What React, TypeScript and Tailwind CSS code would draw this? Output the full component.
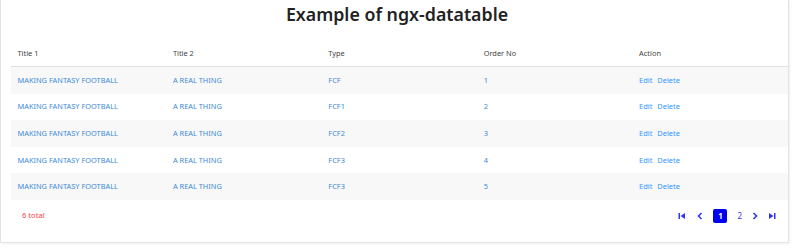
import React from 'react';

const rows = [
  { t1: 'MAKING FANTASY FOOTBALL', t2: 'A REAL THING', type: 'FCF', no: '1' },
  { t1: 'MAKING FANTASY FOOTBALL', t2: 'A REAL THING', type: 'FCF1', no: '2' },
  { t1: 'MAKING FANTASY FOOTBALL', t2: 'A REAL THING', type: 'FCF2', no: '3' },
  { t1: 'MAKING FANTASY FOOTBALL', t2: 'A REAL THING', type: 'FCF3', no: '4' },
  { t1: 'MAKING FANTASY FOOTBALL', t2: 'A REAL THING', type: 'FCF3', no: '5' },
];

const headers = ['Title 1', 'Title 2', 'Type', 'Order No', 'Action'];

const FirstIcon = () => (
  <svg width="8" height="8" viewBox="0 0 8 8" fill="#3535f5">
    <rect x="0.5" y="1" width="1.5" height="6" />
    <path d="M7 1 L2.5 4 L7 7 Z" />
  </svg>
);
const LastIcon = () => (
  <svg width="8" height="8" viewBox="0 0 8 8" fill="#3535f5">
    <rect x="6" y="1" width="1.5" height="6" />
    <path d="M1 1 L5.5 4 L1 7 Z" />
  </svg>
);
const Chevron = ({ left }: { left?: boolean }) => (
  <svg width="6" height="8" viewBox="0 0 6 8" fill="none" stroke="#3535f5" strokeWidth="1.6">
    {left ? <path d="M4.5 1 L1.5 4 L4.5 7" /> : <path d="M1.5 1 L4.5 4 L1.5 7" />}
  </svg>
);

export default function App() {
  return (
    <div className="w-[800px] h-[250px] bg-white font-['Noto_Sans','Open_Sans',sans-serif] overflow-hidden">
      <div className="w-[789px] h-[243px] border-l border-r border-b border-[#e3e3e3] shadow-[1px_1px_2px_rgba(0,0,0,0.06)] flex flex-col">
        <h1 className="text-center text-[17.8px] leading-[29px] font-semibold text-[#222] pl-[5px]">
          Example of ngx-datatable
        </h1>
        <div className="ml-[10px] mt-[11px] flex flex-col">
          <div className="grid grid-cols-5 h-[27px] items-center border-b border-[#e2e2e2] shadow-[0_1px_1px_rgba(0,0,0,0.04)]">
            {headers.map((h) => (
              <div key={h} className="pl-[6.5px] text-[7.4px] text-[#444] pt-[1px]">{h}</div>
            ))}
          </div>
          {rows.map((r, i) => (
            <div
              key={i}
              className={`grid grid-cols-5 h-[26.6px] items-center text-[7.4px] ${i % 2 === 0 ? 'bg-[#f8f8f8]' : 'bg-white'}`}
            >
              <div className="pl-[6.5px] text-[#3d8ad6]">{r.t1}</div>
              <div className="pl-[6.5px] text-[#3d8ad6]">{r.t2}</div>
              <div className="pl-[6.5px] text-[#3d8ad6]">{r.type}</div>
              <div className="pl-[6.5px] text-[#3d8ad6]">{r.no}</div>
              <div className="pl-[6.5px] flex gap-[5px] text-[#2f95ff]">
                <span>Edit</span>
                <span>Delete</span>
              </div>
            </div>
          ))}
          <div className="flex items-center justify-between h-[32px] pl-[11px] pr-[12px]">
            <span className="text-[7.6px] text-[#ff4040]">6 total</span>
            <div className="flex items-center gap-[10px] text-[8px] text-[#3535f5]">
              <span className="mr-[1px]"><FirstIcon /></span>
              <Chevron left />
              <span className="w-[14px] h-[14px] rounded-[2px] bg-[#0000ee] text-white font-bold flex items-center justify-center">1</span>
              <span>2</span>
              <Chevron />
              <LastIcon />
            </div>
          </div>
        </div>
      </div>
    </div>
  );
}
